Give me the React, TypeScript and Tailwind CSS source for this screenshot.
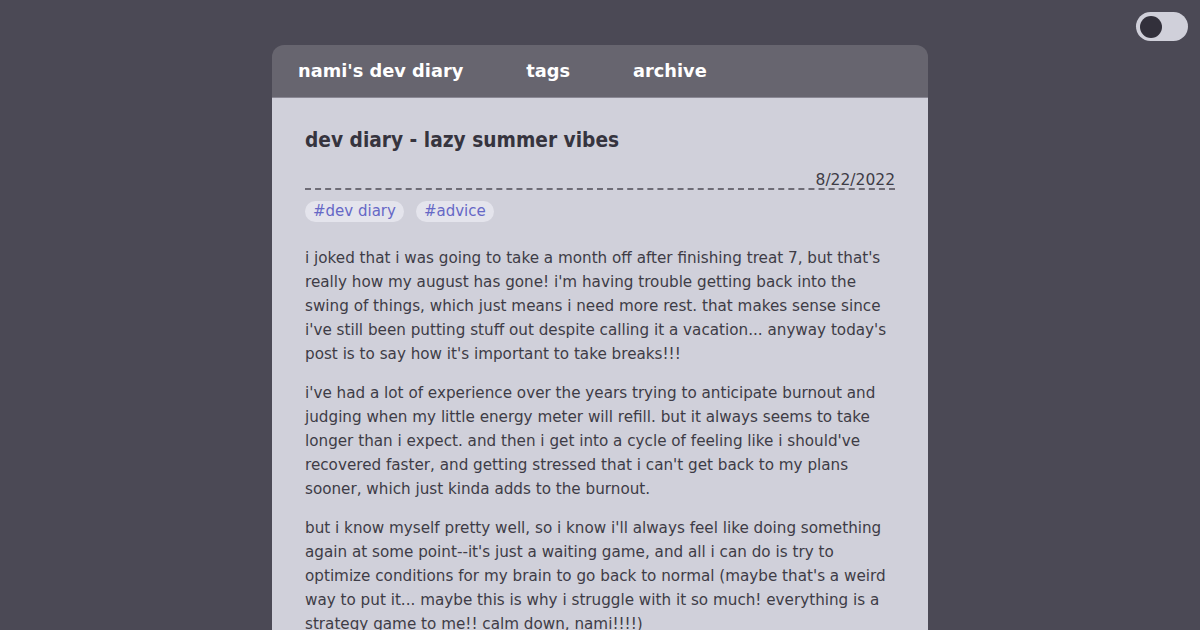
import React from 'react';

const paragraphs = [
  "i joked that i was going to take a month off after finishing treat 7, but that's really how my august has gone! i'm having trouble getting back into the swing of things, which just means i need more rest. that makes sense since i've still been putting stuff out despite calling it a vacation... anyway today's post is to say how it's important to take breaks!!!",
  "i've had a lot of experience over the years trying to anticipate burnout and judging when my little energy meter will refill. but it always seems to take longer than i expect. and then i get into a cycle of feeling like i should've recovered faster, and getting stressed that i can't get back to my plans sooner, which just kinda adds to the burnout.",
  "but i know myself pretty well, so i know i'll always feel like doing something again at some point--it's just a waiting game, and all i can do is try to optimize conditions for my brain to go back to normal (maybe that's a weird way to put it... maybe this is why i struggle with it so much! everything is a strategy game to me!! calm down, nami!!!!)",
];

export default function App() {
  return (
    <div className="relative h-[630px] overflow-hidden bg-[#4b4955] font-['DejaVu_Sans',sans-serif]">
      <button className="absolute right-[12px] top-[12px] w-[52px] h-[29px] rounded-full bg-[#d0d0da] flex items-center px-[4px]">
        <span className="block w-[22px] h-[22px] rounded-full bg-[#32303b]" />
      </button>

      <div className="mx-auto w-[656px] pt-[45px]">
        <nav className="flex items-center gap-[63px] h-[53px] px-[26px] bg-[#67656f] rounded-t-[12px] border-b border-[#8a8894]">
          <a className="text-white font-bold text-[17.8px]">nami's dev diary</a>
          <a className="text-white font-bold text-[17.8px]">tags</a>
          <a className="text-white font-bold text-[17.8px]">archive</a>
        </nav>

        <main className="bg-[#d0d0da] px-[33px] pt-[27px] pb-10 text-[#3e3c46]">
          <h1 className="font-['DejaVu_Sans_Condensed','DejaVu_Sans',sans-serif] font-stretch-condensed font-bold text-[20.7px] leading-[30px] text-[#36343e]">
            dev diary - lazy summer vibes
          </h1>
          <div className="mt-[18px] border-b-2 border-dashed border-[#6e6c76] flex justify-end">
            <span className="text-[15.5px] leading-[15px] text-[#3e3c46]">8/22/2022</span>
          </div>
          <div className="mt-[11px] flex gap-[12px]">
            <span className="px-[8px] h-[21px] leading-[21px] rounded-full bg-[#e4e4ec] text-[#6668c6] text-[15px]">#dev diary</span>
            <span className="px-[8px] h-[21px] leading-[21px] rounded-full bg-[#e4e4ec] text-[#6668c6] text-[15px]">#advice</span>
          </div>
          <div className="mt-[24px] flex flex-col gap-[15px]">
            {paragraphs.map((p, i) => (
              <p key={i} className="text-[15.2px] leading-[24px]">{p}</p>
            ))}
          </div>
        </main>
      </div>
    </div>
  );
}
